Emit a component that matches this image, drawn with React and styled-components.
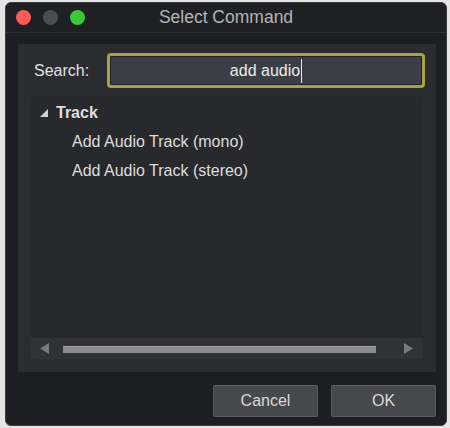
import React from "react";
import styled, { createGlobalStyle } from "styled-components";

const Global = createGlobalStyle`
  html, body { margin: 0; padding: 0; background: #e4e4e4; }
  body { font-family: "Liberation Sans", Arial, sans-serif; }
  * { box-sizing: border-box; }
`;

const Window = styled.div`
  margin: 2px 0 0 5px;
  width: 442px;
  height: 424px;
  background: #1d1e21;
  border: 1px solid #3d3e41;
  border-radius: 6px;
  display: flex;
  flex-direction: column;
  overflow: hidden;
`;

const TitleBar = styled.div`
  position: relative;
  height: 30px;
  flex: none;
  display: flex;
  align-items: center;
  justify-content: center;
  background: #1f2023;
  border-bottom: 1px solid #2f3033;
`;

const Lights = styled.div`
  position: absolute;
  left: 10px;
  top: 7px;
  display: flex;
  gap: 12px;
`;

const Light = styled.span`
  width: 15px;
  height: 15px;
  border-radius: 50%;
  background: ${(p) => p.$c};
`;

const Title = styled.div`
  font-size: 17.5px;
  color: #b4b4b6;
  letter-spacing: 0;
`;

const Body = styled.div`
  flex: 1;
  display: flex;
  flex-direction: column;
  padding: 11px 10px 0 12px;
`;

const Panel = styled.div`
  height: 328px;
  background: #2b2c30;
  padding: 9px 11px 13px 13px;
  display: flex;
  flex-direction: column;
`;

const SearchRow = styled.div`
  display: flex;
  align-items: center;
  padding-left: 3px;
`;

const Label = styled.label`
  width: 73px;
  font-size: 16px;
  color: #e2e2e2;
`;

const SearchBox = styled.div`
  flex: 1;
  height: 35px;
  border: 3px solid #a9a33e;
  border-radius: 4px;
  box-shadow: inset 0 0 0 1px #1c2030;
  background: #3b3e47;
  display: flex;
  align-items: center;
  justify-content: center;
  font-size: 16px;
  color: #ececec;
`;

const Caret = styled.span`
  display: inline-block;
  width: 1px;
  height: 24px;
  background: #e8e8e8;
  margin-left: 1px;
  vertical-align: middle;
`;

const List = styled.div`
  margin-top: 9px;
  margin-right: 2px;
  flex: 1;
  background: #28292d;
  display: flex;
  flex-direction: column;
`;

const Rows = styled.div`
  flex: 1;
  padding-top: 1px;
`;

const Row = styled.div`
  height: 29px;
  line-height: 29px;
  font-size: 16px;
  color: #dedede;
  padding-left: ${(p) => p.$indent}px;
  display: flex;
  align-items: center;
  font-weight: ${(p) => (p.$bold ? 700 : 400)};
`;

const Disclosure = styled.svg`
  width: 8px;
  height: 8px;
  margin-right: 8px;
  margin-top: 1px;
`;

const ScrollBar = styled.div`
  height: 21px;
  background: #313236;
  display: flex;
  align-items: center;
  padding: 0 10px 0 9px;
`;

const Arrow = styled.svg`
  width: 9px;
  height: 11px;
  flex: none;
`;

const Thumb = styled.div`
  height: 7px;
  margin: 1px 28px 0 14px;
  flex: 1;
  background: #8b8b8d;
  border-top: 1px solid #a0a0a2;
`;

const Buttons = styled.div`
  display: flex;
  justify-content: flex-end;
  gap: 13px;
  margin-top: 13px;
`;

const Button = styled.button`
  width: 105px;
  height: 32px;
  background: #47484b;
  border: 1px solid #58595c;
  border-top-color: #606164;
  border-radius: 2px;
  color: #dadada;
  font-family: "Liberation Sans", Arial, sans-serif;
  font-size: 16px;
  padding: 0;
`;

export default function App() {
  return (
    <>
      <Global />
      <Window>
        <TitleBar>
          <Lights>
            <Light $c="#fd5c56" />
            <Light $c="#4b4c4f" />
            <Light $c="#3cc83a" />
          </Lights>
          <Title>Select Command</Title>
        </TitleBar>
        <Body>
          <Panel>
            <SearchRow>
              <Label>Search:</Label>
              <SearchBox>
                add audio<Caret />
              </SearchBox>
            </SearchRow>
            <List>
              <Rows>
                <Row $indent={9} $bold>
                  <Disclosure viewBox="0 0 8 8">
                    <polygon points="8,0 8,8 0,8" fill="#cfcfcf" />
                  </Disclosure>
                  Track
                </Row>
                <Row $indent={41}>Add Audio Track (mono)</Row>
                <Row $indent={41}>Add Audio Track (stereo)</Row>
              </Rows>
              <ScrollBar>
                <Arrow viewBox="0 0 9 11">
                  <polygon points="9,0 9,11 0,5.5" fill="#7a7a7c" />
                </Arrow>
                <Thumb />
                <Arrow viewBox="0 0 9 11">
                  <polygon points="0,0 0,11 9,5.5" fill="#7a7a7c" />
                </Arrow>
              </ScrollBar>
            </List>
          </Panel>
          <Buttons>
            <Button>Cancel</Button>
            <Button>OK</Button>
          </Buttons>
        </Body>
      </Window>
    </>
  );
}
